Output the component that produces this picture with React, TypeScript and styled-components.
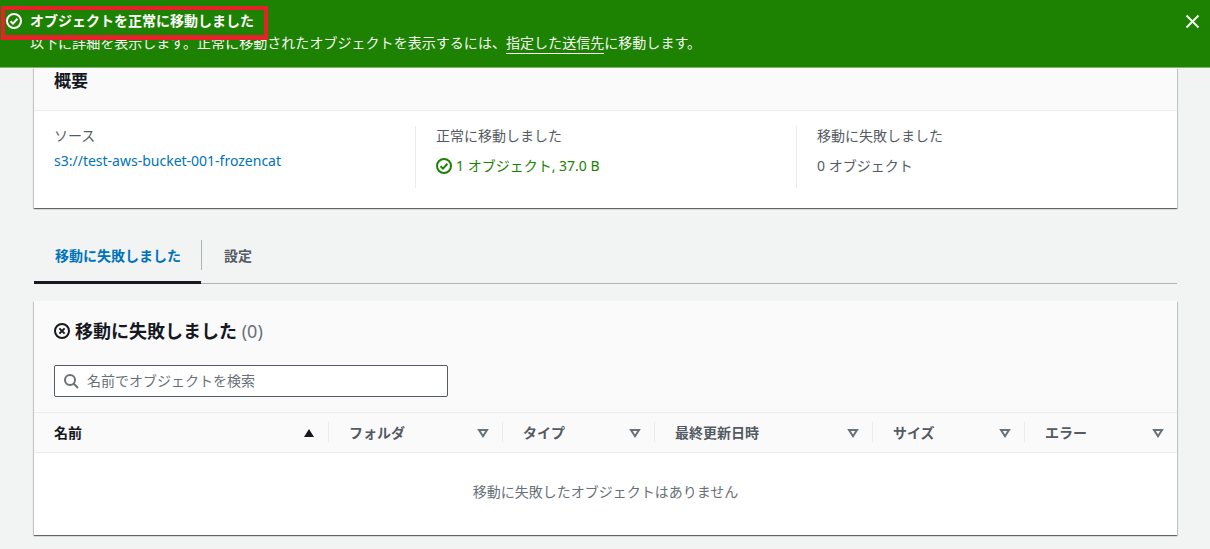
import React from "react";
import styled, { createGlobalStyle } from "styled-components";

const Global = createGlobalStyle`
  html, body { margin: 0; padding: 0; background: #f2f3f3; }
  body { font-family: "Noto Sans", "Noto Sans CJK JP", sans-serif; color: #16191f; font-size: 14px; width: 1210px; height: 549px; overflow: hidden; }
  * { box-sizing: border-box; }
`;

const Banner = styled.div`
  position: relative;
  height: 68px;
  background: #1d8102;
  border-bottom: 1px solid #7fb570;
  color: #fff;
  padding: 11px 0 0 6px;
`;
const BannerTitle = styled.div`
  display: flex;
  align-items: center;
  gap: 8px;
  height: 20px;
  font-size: 14px;
  font-weight: 700;
  line-height: 20px;
`;
const BannerText = styled.div`
  margin: 2px 0 0 24px;
  font-size: 14px;
  line-height: 20px;
  letter-spacing: 0.04px;
  color: #f4f8f2;
`;
const BannerLink = styled.span`
  border-bottom: 1px solid #fff;
  padding-bottom: 1px;
`;
const Close = styled.svg`
  position: absolute;
  top: 14px;
  right: 10px;
`;
const Annotation = styled.div`
  position: absolute;
  left: 1px;
  top: 6px;
  width: 267px;
  height: 34px;
  border: 4px solid #e8202a;
  border-bottom-width: 5px;
`;
const Main = styled.main`
  width: 1143px;
  margin-left: 34px;
`;
const Card = styled.section`
  background: #fff;
  box-shadow: 0 1px 1px 0 rgba(0, 0, 0, 0.45), 1px 1px 1px 0 rgba(0, 0, 0, 0.13), -1px 1px 1px 0 rgba(0, 0, 0, 0.13);
`;
const SummaryHeader = styled.div`
  height: 43px;
  background: #fafafa;
  border-bottom: 1px solid #eaeded;
  padding: 2px 20px 0;
  font-size: 17px;
  font-weight: 700;
  line-height: 22px;
`;
const SummaryBody = styled.div`
  display: grid;
  grid-template-columns: 381px 381px 381px;
  height: 97px;
  padding-top: 15px;
`;
const Column = styled.div<{ $divided?: boolean }>`
  height: 62px;
  padding-left: 20px;
  border-left: ${(p) => (p.$divided ? "1px solid #eaeded" : "none")};
`;
const Label = styled.div`
  font-size: 14px;
  line-height: 20px;
  color: #545b64;
  margin-bottom: 5px;
`;
const SourceLink = styled.a`
  display: block;
  margin-top: 1px;
  font-size: 14px;
  line-height: 20px;
  color: #0073bb;
`;
const Stat = styled.div<{ $ok?: boolean }>`
  display: flex;
  align-items: center;
  gap: 4px;
  height: 20px;
  margin-top: 10px;
  font-size: 14px;
  line-height: 20px;
  color: ${(p) => (p.$ok ? "#1d8102" : "#545b64")};
`;
const Tabs = styled.nav`
  display: flex;
  align-items: center;
  height: 60px;
  margin-top: 16px;
  border-bottom: 1px solid #aab7b8;
`;
const Tab = styled.div<{ $active?: boolean }>`
  display: flex;
  align-items: center;
  white-space: nowrap;
  width: ${(p) => (p.$active ? "167px" : "auto")};
  height: ${(p) => (p.$active ? "60px" : "59px")};
  margin-bottom: ${(p) => (p.$active ? "-1px" : "0")};
  padding: ${(p) => (p.$active ? "5px 21px 0" : "2px 22px 0")};
  font-size: 14px;
  font-weight: 700;
  color: ${(p) => (p.$active ? "#0073bb" : "#545b64")};
  border-bottom: ${(p) => (p.$active ? "3px solid #16191f" : "none")};
`;
const TabDivider = styled.div`
  width: 1px;
  height: 30px;
  margin-top: 3px;
  background: #aab7b8;
`;
const FailCard = styled(Card)`
  margin-top: 17px;
  height: 234px;
`;
const FailHeader = styled.div`
  height: 112px;
  background: #fafafa;
  border-bottom: 1px solid #eaeded;
  padding: 18px 20px 0;
`;
const FailTitle = styled.div`
  display: flex;
  align-items: center;
  gap: 5px;
  height: 24px;
  font-size: 18px;
  font-weight: 700;
  line-height: 24px;
`;
const Count = styled.span`
  font-weight: 400;
  color: #687078;
`;
const Search = styled.div`
  display: flex;
  align-items: center;
  gap: 8px;
  width: 394px;
  height: 32px;
  margin-top: 22px;
  padding-left: 8px;
  background: #fff;
  border: 1px solid #545b64;
  border-radius: 2px;
  font-size: 14px;
  color: #687078;
`;
const SearchText = styled.span`
  margin-bottom: 2px;
`;
const HeadRow = styled.div`
  display: grid;
  grid-template-columns: 294px 174px 152px 218px 152px 153px;
  height: 40px;
  background: #fafafa;
  border-bottom: 1px solid #eaeded;
`;
const HeadCell = styled.div<{ $first?: boolean; $sorted?: boolean }>`
  display: flex;
  align-items: center;
  justify-content: space-between;
  padding: 0 13px 0 ${(p) => (p.$first ? "20px" : "21px")};
  font-size: 14px;
  font-weight: 700;
  color: ${(p) => (p.$sorted ? "#16191f" : "#545b64")};
  position: relative;
  &::before {
    content: "";
    display: ${(p) => (p.$first ? "none" : "block")};
    position: absolute;
    left: 0;
    top: 9px;
    height: 20px;
    width: 1px;
    background: #eaeded;
  }
`;
const HeadLabel = styled.span`
  margin-bottom: 2px;
`;
const Empty = styled.div`
  height: 81px;
  display: flex;
  align-items: center;
  justify-content: center;
  padding-bottom: 5px;
  font-size: 14px;
  color: #687078;
`;

const CheckCircle = ({ size, color }: { size: number; color: string }) => (
  <svg width={size} height={size} viewBox="0 0 16 16" fill="none" stroke={color} strokeWidth="2">
    <circle cx="8" cy="8" r="7" />
    <path d="M4.6 8.2 7 10.6l4.4-4.8" />
  </svg>
);
const Caret = ({ filled }: { filled?: boolean }) => (
  <svg width="12" height="10" viewBox="0 0 12 10">
    {filled ? (
      <path d="M1 9 6 1l5 8z" fill="#16191f" />
    ) : (
      <path d="M2 2h8L6 8.2z" fill="none" stroke="#687078" strokeWidth="2" />
    )}
  </svg>
);

const columns = ["フォルダ", "タイプ", "最終更新日時", "サイズ", "エラー"];

export default function App() {
  return (
    <>
      <Global />
      <Banner>
        <BannerTitle>
          <CheckCircle size={16} color="#fff" />
          <span>オブジェクトを正常に移動しました</span>
        </BannerTitle>
        <BannerText>
          以下に詳細を表示します。正常に移動されたオブジェクトを表示するには、<BannerLink>指定した送信先</BannerLink>に移動します。
        </BannerText>
        <Close width="15" height="15" viewBox="0 0 15 15" fill="none" stroke="#f1f6ee" strokeWidth="2">
          <path d="M1.5 1.5l12 12M13.5 1.5l-12 12" />
        </Close>
        <Annotation />
      </Banner>
      <Main>
        <Card>
          <SummaryHeader>概要</SummaryHeader>
          <SummaryBody>
            <Column>
              <Label>ソース</Label>
              <SourceLink>s3://test-aws-bucket-001-frozencat</SourceLink>
            </Column>
            <Column $divided>
              <Label>正常に移動しました</Label>
              <Stat $ok>
                <CheckCircle size={16} color="#1d8102" />
                <span>1 オブジェクト, 37.0 B</span>
              </Stat>
            </Column>
            <Column $divided>
              <Label>移動に失敗しました</Label>
              <Stat>0 オブジェクト</Stat>
            </Column>
          </SummaryBody>
        </Card>
        <Tabs>
          <Tab $active>移動に失敗しました</Tab>
          <TabDivider />
          <Tab>設定</Tab>
        </Tabs>
        <FailCard>
          <FailHeader>
            <FailTitle>
              <svg width="16" height="16" viewBox="0 0 16 16" fill="none" stroke="#16191f" strokeWidth="2">
                <circle cx="8" cy="8" r="7" />
                <path d="M5.4 5.4l5.2 5.2M10.6 5.4l-5.2 5.2" />
              </svg>
              <span>
                移動に失敗しました <Count>(0)</Count>
              </span>
            </FailTitle>
            <Search>
              <svg width="16" height="16" viewBox="0 0 16 16" fill="none" stroke="#687078" strokeWidth="2">
                <circle cx="7" cy="7" r="5" />
                <path d="M10.5 10.5 15 15" />
              </svg>
              <SearchText>名前でオブジェクトを検索</SearchText>
            </Search>
          </FailHeader>
          <HeadRow>
            <HeadCell $first $sorted>
              <HeadLabel>名前</HeadLabel>
              <Caret filled />
            </HeadCell>
            {columns.map((c) => (
              <HeadCell key={c}>
                <HeadLabel>{c}</HeadLabel>
                <Caret />
              </HeadCell>
            ))}
          </HeadRow>
          <Empty>移動に失敗したオブジェクトはありません</Empty>
        </FailCard>
      </Main>
    </>
  );
}
